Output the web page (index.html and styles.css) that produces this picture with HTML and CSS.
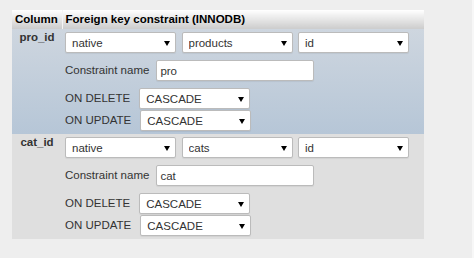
FILE: index.html
```html
<!DOCTYPE html>
<html>
<head>
<meta charset="utf-8">
<link rel="stylesheet" href="styles.css">
</head>
<body>
<div class="page">
  <table class="fk">
    <thead>
      <tr>
        <th class="col-name">Column</th>
        <th class="col-fk">Foreign key constraint (INNODB)</th>
      </tr>
    </thead>
    <tbody>
      <tr class="row hover">
        <td class="colname">pro_id</td>
        <td class="fkcell">
          <div class="refs">
            <span class="sel"><select class="dd"><option>native</option></select></span>
            <span class="sel"><select class="dd"><option>products</option></select></span>
            <span class="sel"><select class="dd"><option>id</option></select></span>
          </div>
          <div class="line name-line">
            <span class="lbl">Constraint name</span>
            <input class="txt" type="text" value="pro">
          </div>
          <div class="line on-line">
            <span class="lbl">ON DELETE</span>
            <span class="sel"><select class="dd"><option>CASCADE</option></select></span>
          </div>
          <div class="line on-line second">
            <span class="lbl">ON UPDATE</span>
            <span class="sel"><select class="dd"><option>CASCADE</option></select></span>
          </div>
        </td>
      </tr>
      <tr class="row even">
        <td class="colname">cat_id</td>
        <td class="fkcell">
          <div class="refs">
            <span class="sel"><select class="dd"><option>native</option></select></span>
            <span class="sel"><select class="dd"><option>cats</option></select></span>
            <span class="sel"><select class="dd"><option>id</option></select></span>
          </div>
          <div class="line name-line">
            <span class="lbl">Constraint name</span>
            <input class="txt" type="text" value="cat">
          </div>
          <div class="line on-line">
            <span class="lbl">ON DELETE</span>
            <span class="sel"><select class="dd"><option>CASCADE</option></select></span>
          </div>
          <div class="line on-line second">
            <span class="lbl">ON UPDATE</span>
            <span class="sel"><select class="dd"><option>CASCADE</option></select></span>
          </div>
        </td>
      </tr>
    </tbody>
  </table>
</div>
</body>
</html>
```

FILE: styles.css
```css
html {
  background: linear-gradient(to right, #eeeeee 472px, #f7f7f7 472px);
  height: 100%;
}
body {
  margin: 0;
  font-family: "Liberation Sans", Arial, sans-serif;
  font-size: 11.5px;
  color: #333;
}
.page {
  padding: 10px 0 0 12px;
}
.fk {
  border-collapse: collapse;
  border-spacing: 0;
  width: 412px;
  table-layout: fixed;
}
.fk th {
  height: 19px;
  padding: 0 3px;
  background: linear-gradient(#ffffff, #cccccc);
  color: #000;
  font-weight: bold;
  text-align: left;
  vertical-align: middle;
  line-height: 13px;
  white-space: nowrap;
}
.fk th.col-name {
  width: 50px;
  box-sizing: border-box;
  padding: 0 0 0 3px;
  border-right: 1px solid #f4f4f4;
}
.row td {
  vertical-align: top;
  padding: 0;
}
.row.hover td {
  background: linear-gradient(#ced6df, #b6c6d7);
}
.row.even td {
  background: #dfdfdf;
}
.colname {
  font-weight: bold;
  text-align: center;
  line-height: 13px;
}
.row td.colname {
  padding-top: 2px;
}
.row td.fkcell {
  padding: 3px 3px 3px 3px;
}
.refs {
  display: flex;
  gap: 5.5px;
}
.line {
  display: flex;
  align-items: center;
  margin-top: 7px;
}
.line.second {
  margin-top: 1px;
}
.name-line {
  gap: 7px;
}
.on-line {
  gap: 9px;
}
.lbl {
  color: #333;
  line-height: 13px;
}
.sel {
  position: relative;
  display: inline-block;
}
.sel::after {
  content: "";
  position: absolute;
  right: 6px;
  top: 9px;
  border-left: 3px solid transparent;
  border-right: 3px solid transparent;
  border-top: 5px solid #000;
  pointer-events: none;
}
.dd {
  appearance: none;
  -webkit-appearance: none;
  display: block;
  box-sizing: border-box;
  width: 111px;
  height: 21px;
  margin: 0;
  padding: 0 14px 0 6px;
  border: 1px solid #bbbbbb;
  border-radius: 2px;
  background: #ffffff;
  font-family: "Liberation Sans", Arial, sans-serif;
  font-size: 11.5px;
  color: #333;
  box-shadow: 0 1px 1px rgba(0, 0, 0, 0.06);
}
.txt {
  box-sizing: border-box;
  width: 158px;
  height: 21px;
  margin: 0;
  padding: 0 3px;
  border: 1px solid #bbbbbb;
  border-radius: 2px;
  background: #ffffff;
  font-family: "Liberation Sans", Arial, sans-serif;
  font-size: 11.5px;
  color: #333;
  box-shadow: 0 1px 1px rgba(0, 0, 0, 0.06);
}
```
